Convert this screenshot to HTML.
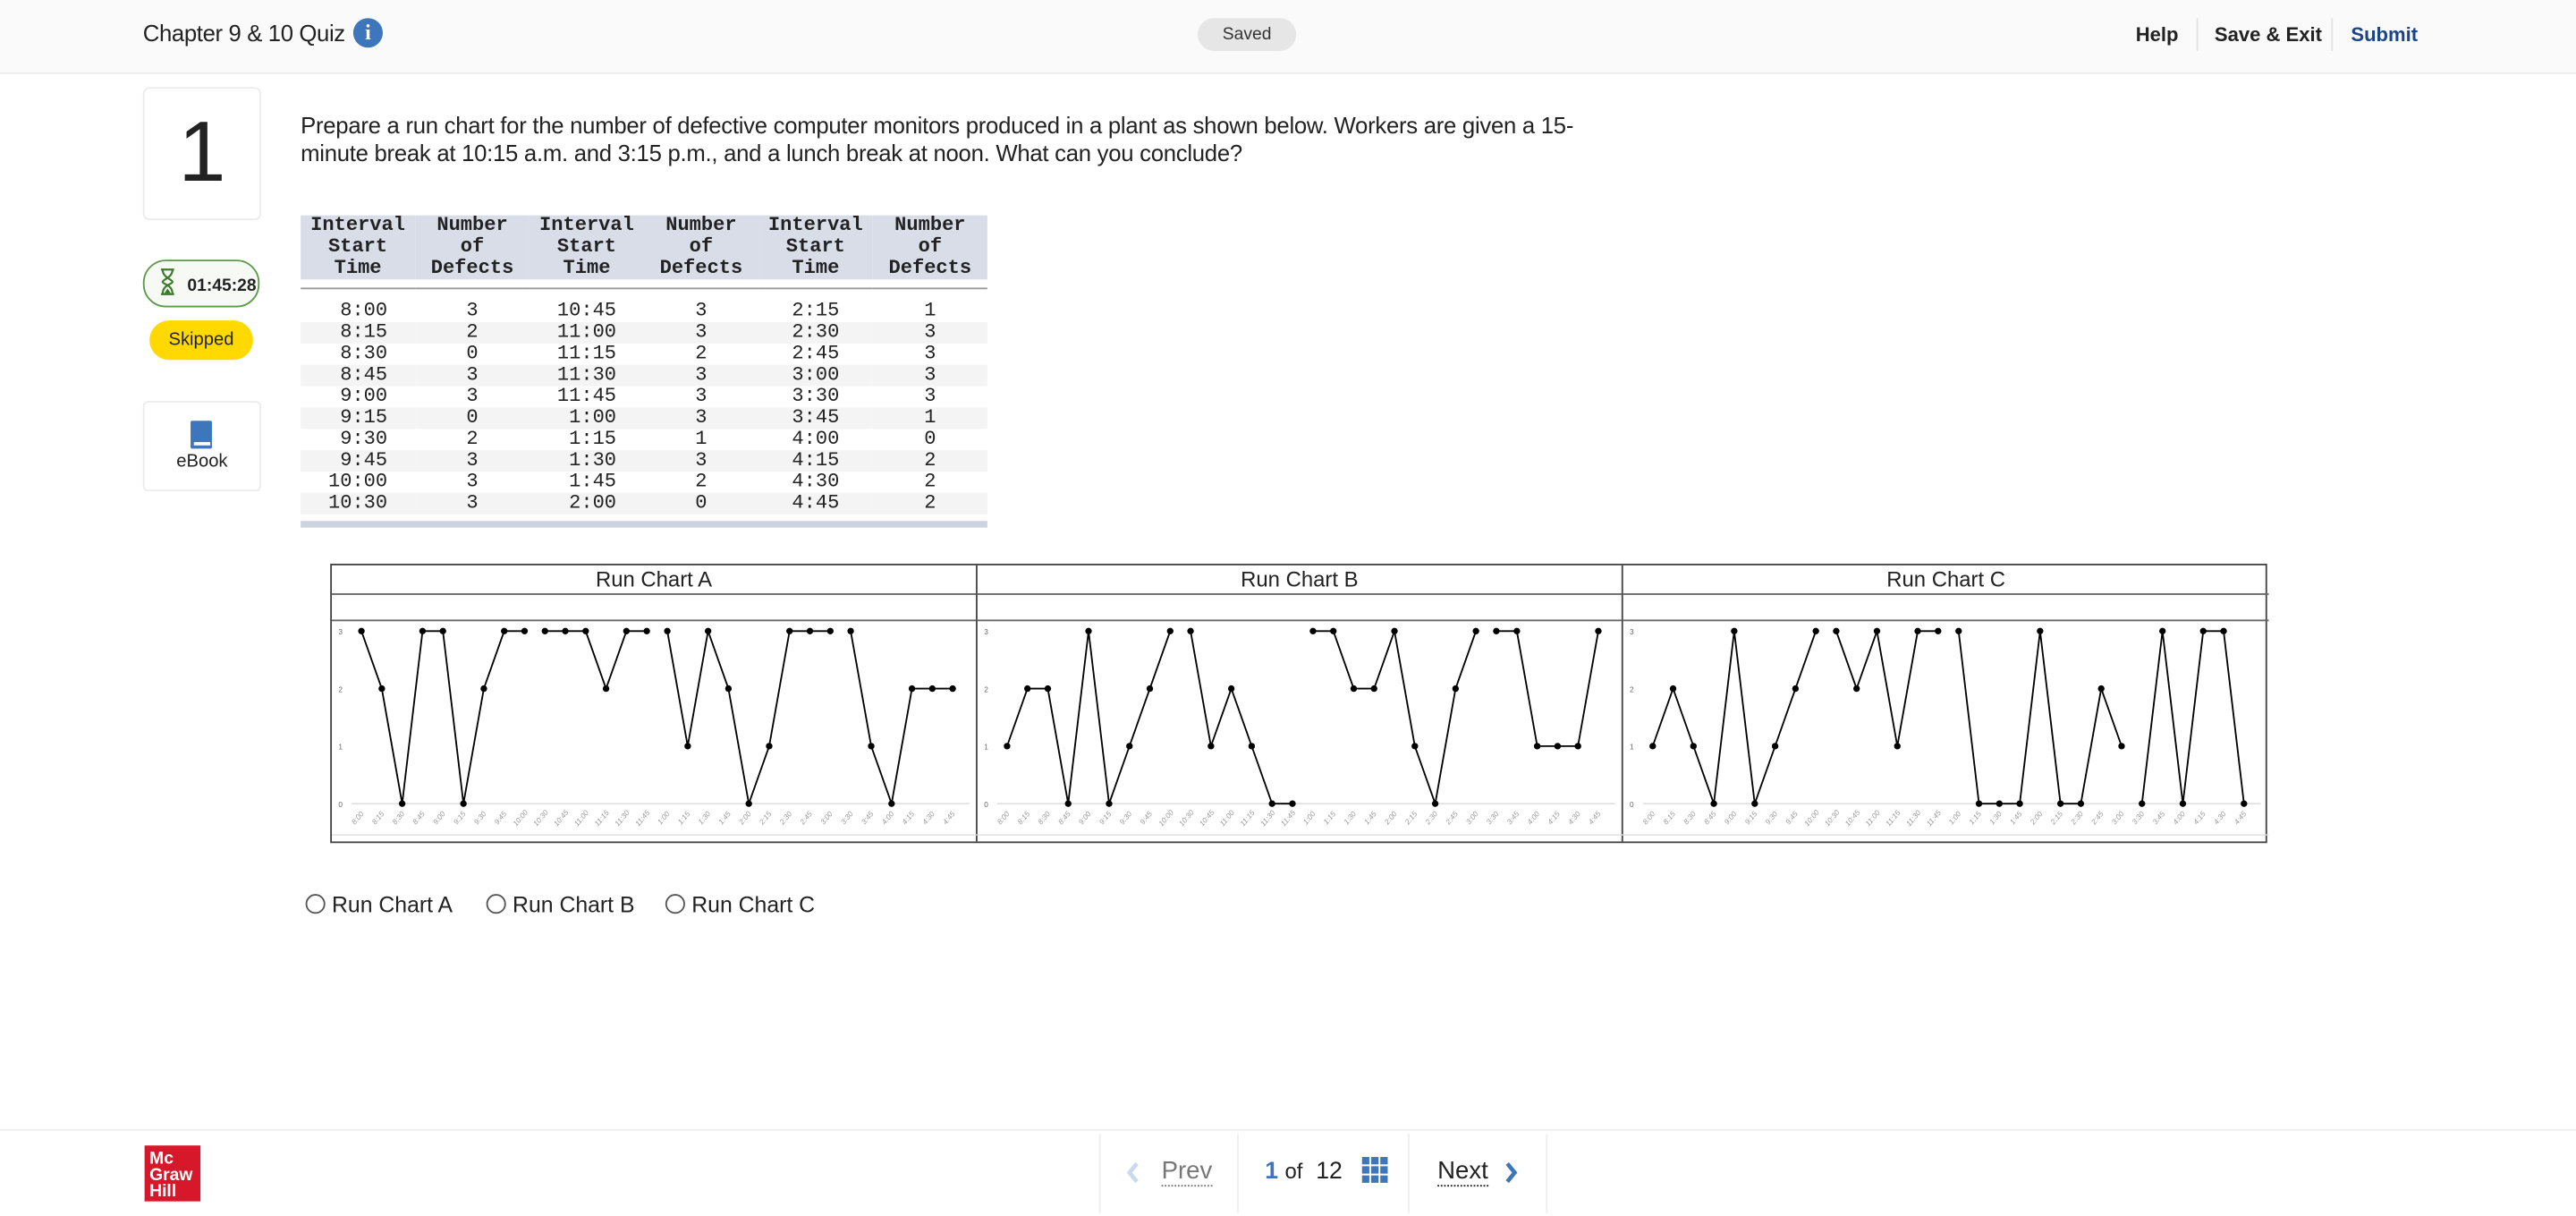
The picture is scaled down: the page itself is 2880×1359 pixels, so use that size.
<!DOCTYPE html>
<html><head><meta charset="utf-8">
<style>
html,body{margin:0;padding:0;background:#fff;width:2880px;height:1358px;overflow:hidden}
#w{position:absolute;left:0;top:0;width:1568px;height:740px;transform:scale(1.836735);transform-origin:0 0;font-family:"Liberation Sans",sans-serif;color:#222}
.a{position:absolute}
.hdr{left:0;top:0;width:1568px;height:44px;background:#fafafa;border-bottom:1px solid #ebebeb}
.nav b{font-weight:bold;font-size:12px}
table.d{border-collapse:collapse;font-family:"Liberation Mono",monospace;font-size:12px;width:418px}
table.d td,table.d th{width:69.6px;text-align:center;padding:0;line-height:13px;height:13px}
table.d th{background:#d9dde8;font-weight:bold;line-height:13px}
table.d tr.z td{background:#f4f4f4}
.ch{left:201px;top:343px;width:1179px;height:170px;border:1px solid #444;box-sizing:border-box}
.cell{position:absolute;top:0;width:393px;height:168px;border-right:1px solid #444;box-sizing:border-box}
.cell .t{height:17px;border-bottom:1px solid #666;text-align:center;font-size:13px;line-height:17px}
.cell .e{height:15px;border-bottom:1px solid #666}
svg text{font-family:"Liberation Sans",sans-serif}
.rad{top:543px;font-size:13.5px}
.rad span{display:inline-block;width:10px;height:10px;border:1px solid #555;border-radius:50%;vertical-align:-1px;margin-right:4px}
</style></head><body><div id="w">
<div class="a hdr"></div>
<div class="a" style="left:87px;top:12px;font-size:14px;letter-spacing:-0.2px">Chapter 9 &amp; 10 Quiz</div>
<div class="a" style="left:215px;top:11px;width:18px;height:18px;border-radius:50%;background:#3d76bb;color:#fff;font:bold 13px 'Liberation Serif',serif;text-align:center;line-height:18px">i</div>
<div class="a" style="left:729px;top:11px;width:60px;height:20px;border-radius:10px;background:#e6e6e6;font-size:10.5px;text-align:center;line-height:20px;color:#333">Saved</div>
<div class="a nav" style="left:1300px;top:12px"><b>Help</b></div>
<div class="a" style="left:1337px;top:11px;width:1px;height:20px;background:#e3e3e3"></div>
<div class="a nav" style="left:1348px;top:12px"><b>Save &amp; Exit</b></div>
<div class="a" style="left:1419px;top:11px;width:1px;height:20px;background:#e3e3e3"></div>
<div class="a nav" style="left:1431px;top:12px;color:#1c4587"><b>Submit</b></div>

<div class="a" style="left:87px;top:53px;width:70px;height:79px;border:1px solid #ececec;border-radius:4px;text-align:center;font-size:52px;line-height:79px">1</div>
<div class="a" style="left:87px;top:158px;width:69px;height:27px;border:1px solid #5a9a48;border-radius:14px;background:#f6f9f4"></div>
<svg class="a" style="left:96px;top:163px" width="12" height="17" viewBox="0 0 12 17"><path d="M2 1h8M2 16h8M3 1c0 5 6 6 6 7.5S3 10 3 16M9 1c0 5-6 6-6 7.5S9 10 9 16" stroke="#3d7a2e" stroke-width="1.2" fill="none"/><path d="M4 15.5l2-3 2 3z" fill="#3d7a2e"/></svg>
<div class="a" style="left:114px;top:168px;font-size:10.5px;font-weight:bold">01:45:28</div>
<div class="a" style="left:91px;top:195px;width:63px;height:24px;border-radius:12px;background:#ffd900;font-size:11px;text-align:center;line-height:24px">Skipped</div>
<div class="a" style="left:87px;top:244px;width:70px;height:53px;border:1px solid #ececec;border-radius:3px"></div>
<div class="a" style="left:116px;top:256px;width:13px;height:17px;background:#3d76bb;border-radius:1px"></div>
<div class="a" style="left:118px;top:269px;width:10px;height:1.5px;background:#fff"></div>
<div class="a" style="left:87px;top:275px;width:72px;text-align:center;font-size:11px">eBook</div>

<div class="a" style="left:183px;top:68px;width:820px;font-size:14px;line-height:17px;letter-spacing:-0.15px;white-space:nowrap">Prepare a run chart for the number of defective computer monitors produced in a plant as shown below. Workers are given a 15-<br>minute break at 10:15 a.m. and 3:15 p.m., and a lunch break at noon. What can you conclude?</div>

<div class="a" style="left:183px;top:131px">
<table class="d">
<tr><th>Interval<br>Start<br>Time</th><th>Number<br>of<br>Defects</th><th>Interval<br>Start<br>Time</th><th>Number<br>of<br>Defects</th><th>Interval<br>Start<br>Time</th><th>Number<br>of<br>Defects</th></tr>
<tr><td colspan="6" style="height:5px;padding:0;border-bottom:1.5px solid #999;line-height:4px"></td></tr>
<tr><td colspan="6" style="height:7px;line-height:7px"></td></tr>
<tr><td>&nbsp;8:00</td><td>3</td><td>10:45</td><td>3</td><td>2:15</td><td>1</td></tr>
<tr class="z"><td>&nbsp;8:15</td><td>2</td><td>11:00</td><td>3</td><td>2:30</td><td>3</td></tr>
<tr><td>&nbsp;8:30</td><td>0</td><td>11:15</td><td>2</td><td>2:45</td><td>3</td></tr>
<tr class="z"><td>&nbsp;8:45</td><td>3</td><td>11:30</td><td>3</td><td>3:00</td><td>3</td></tr>
<tr><td>&nbsp;9:00</td><td>3</td><td>11:45</td><td>3</td><td>3:30</td><td>3</td></tr>
<tr class="z"><td>&nbsp;9:15</td><td>0</td><td>&nbsp;1:00</td><td>3</td><td>3:45</td><td>1</td></tr>
<tr><td>&nbsp;9:30</td><td>2</td><td>&nbsp;1:15</td><td>1</td><td>4:00</td><td>0</td></tr>
<tr class="z"><td>&nbsp;9:45</td><td>3</td><td>&nbsp;1:30</td><td>3</td><td>4:15</td><td>2</td></tr>
<tr><td>10:00</td><td>3</td><td>&nbsp;1:45</td><td>2</td><td>4:30</td><td>2</td></tr>
<tr class="z"><td>10:30</td><td>3</td><td>&nbsp;2:00</td><td>0</td><td>4:45</td><td>2</td></tr>
<tr><td colspan="6" style="height:4px;line-height:4px"></td></tr>
<tr><td colspan="6" style="height:4px;line-height:4px;background:#ccd3e0"></td></tr>
</table></div>

<svg width="0" height="0" style="position:absolute"><defs>
<marker id="m" markerUnits="userSpaceOnUse" markerWidth="6" markerHeight="6" refX="3" refY="3"><circle cx="3" cy="3" r="2" fill="#000"/></marker>
<g id="ax">
<line x1="12" y1="111" x2="388" y2="111" stroke="#ddd" stroke-width="0.8"/>
<line x1="0" y1="130" x2="393" y2="130" stroke="#ddd" stroke-width="0.8"/>
<g font-size="4.5" fill="#666"><text x="4" y="8">3</text><text x="4" y="43">2</text><text x="4" y="78">1</text><text x="4" y="113">0</text></g>
<g font-size="4.5" fill="#999" font-style="italic">
<text transform="translate(14,124) rotate(-50)">8:00</text>
<text transform="translate(26.4,124) rotate(-50)">8:15</text>
<text transform="translate(38.8,124) rotate(-50)">8:30</text>
<text transform="translate(51.2,124) rotate(-50)">8:45</text>
<text transform="translate(63.6,124) rotate(-50)">9:00</text>
<text transform="translate(76.1,124) rotate(-50)">9:15</text>
<text transform="translate(88.5,124) rotate(-50)">9:30</text>
<text transform="translate(100.9,124) rotate(-50)">9:45</text>
<text transform="translate(112.3,125) rotate(-50)">10:00</text>
<text transform="translate(124.7,125) rotate(-50)">10:30</text>
<text transform="translate(137.1,125) rotate(-50)">10:45</text>
<text transform="translate(149.5,125) rotate(-50)">11:00</text>
<text transform="translate(161.9,125) rotate(-50)">11:15</text>
<text transform="translate(174.3,125) rotate(-50)">11:30</text>
<text transform="translate(186.7,125) rotate(-50)">11:45</text>
<text transform="translate(200.2,124) rotate(-50)">1:00</text>
<text transform="translate(212.6,124) rotate(-50)">1:15</text>
<text transform="translate(225,124) rotate(-50)">1:30</text>
<text transform="translate(237.4,124) rotate(-50)">1:45</text>
<text transform="translate(249.8,124) rotate(-50)">2:00</text>
<text transform="translate(262.2,124) rotate(-50)">2:15</text>
<text transform="translate(274.6,124) rotate(-50)">2:30</text>
<text transform="translate(287,124) rotate(-50)">2:45</text>
<text transform="translate(299.4,124) rotate(-50)">3:00</text>
<text transform="translate(311.8,124) rotate(-50)">3:30</text>
<text transform="translate(324.3,124) rotate(-50)">3:45</text>
<text transform="translate(336.7,124) rotate(-50)">4:00</text>
<text transform="translate(349.1,124) rotate(-50)">4:15</text>
<text transform="translate(361.5,124) rotate(-50)">4:30</text>
<text transform="translate(373.9,124) rotate(-50)">4:45</text>
</g></g></defs></svg>

<div class="a ch">
<div class="cell" style="left:0">
<div class="t">Run Chart A</div><div class="e"></div>
<svg width="393" height="136"><use href="#ax"/>
<g fill="none" stroke="#000" stroke-width="1" marker-start="url(#m)" marker-mid="url(#m)" marker-end="url(#m)">
<polyline points="18,6 30.4,41 42.8,111 55.2,6 67.6,6 80.1,111 92.5,41 104.9,6 117.3,6"/>
<polyline points="129.7,6 142.1,6 154.5,6 166.9,41 179.3,6 191.7,6"/>
<polyline points="204.2,6 216.6,76 229,6 241.4,41 253.8,111 266.2,76 278.6,6 291,6 303.4,6"/>
<polyline points="315.8,6 328.3,76 340.7,111 353.1,41 365.5,41 377.9,41"/>
</g></svg></div>
<div class="cell" style="left:393px">
<div class="t">Run Chart B</div><div class="e"></div>
<svg width="393" height="136"><use href="#ax"/>
<g fill="none" stroke="#000" stroke-width="1" marker-start="url(#m)" marker-mid="url(#m)" marker-end="url(#m)">
<polyline points="18,76 30.4,41 42.8,41 55.2,111 67.6,6 80.1,111 92.5,76 104.9,41 117.3,6"/>
<polyline points="129.7,6 142.1,76 154.5,41 166.9,76 179.3,111 191.7,111"/>
<polyline points="204.2,6 216.6,6 229,41 241.4,41 253.8,6 266.2,76 278.6,111 291,41 303.4,6"/>
<polyline points="315.8,6 328.3,6 340.7,76 353.1,76 365.5,76 377.9,6"/>
</g></svg></div>
<div class="cell" style="left:786px;border-right:none">
<div class="t">Run Chart C</div><div class="e"></div>
<svg width="393" height="136"><use href="#ax"/>
<g fill="none" stroke="#000" stroke-width="1" marker-start="url(#m)" marker-mid="url(#m)" marker-end="url(#m)">
<polyline points="18,76 30.4,41 42.8,76 55.2,111 67.6,6 80.1,111 92.5,76 104.9,41 117.3,6"/>
<polyline points="129.7,6 142.1,41 154.5,6 166.9,76 179.3,6 191.7,6"/>
<polyline points="204.2,6 216.6,111 229,111 241.4,111 253.8,6 266.2,111 278.6,111 291,41 303.4,76"/>
<polyline points="315.8,111 328.3,6 340.7,111 353.1,6 365.5,6 377.9,111"/>
</g></svg></div>
</div>

<div class="a rad" style="left:186px"><span></span>Run Chart A</div>
<div class="a rad" style="left:296px"><span></span>Run Chart B</div>
<div class="a rad" style="left:405px"><span></span>Run Chart C</div>

<div class="a" style="left:0;top:687px;width:1568px;height:1px;background:#eee"></div>
<div class="a" style="left:88px;top:697px;width:34px;height:34px;background:#d7182a;color:#fff;font-weight:bold;font-size:10.5px;line-height:10px;padding:3px 0 0 3px;box-sizing:border-box">Mc<br>Graw<br>Hill</div>
<div class="a" style="left:669px;top:690px;width:1px;height:48px;background:#eee"></div>
<div class="a" style="left:753px;top:690px;width:1px;height:48px;background:#eee"></div>
<div class="a" style="left:857px;top:690px;width:1px;height:48px;background:#eee"></div>
<div class="a" style="left:941px;top:690px;width:1px;height:48px;background:#eee"></div>
<svg class="a" style="left:685px;top:706px" width="10" height="15"><path d="M7 2L2.5 7.5 7 13" stroke="#c9daee" stroke-width="2.5" fill="none"/></svg>
<div class="a" style="left:707px;top:705px;font-size:15px;color:#777;border-bottom:1.5px dotted #777;line-height:16px">Prev</div>
<div class="a" style="left:770px;top:705px;font-size:14.5px"><b style="color:#3d76bb">1</b> <span style="font-size:13px">of</span>&nbsp; 12</div>
<svg class="a" style="left:829px;top:704px" width="16" height="16"><g fill="#3d76bb"><rect x="0" y="0" width="4.5" height="4.5"/><rect x="5.6" y="0" width="4.5" height="4.5"/><rect x="11.2" y="0" width="4.5" height="4.5"/><rect x="0" y="5.6" width="4.5" height="4.5"/><rect x="5.6" y="5.6" width="4.5" height="4.5"/><rect x="11.2" y="5.6" width="4.5" height="4.5"/><rect x="0" y="11.2" width="4.5" height="4.5"/><rect x="5.6" y="11.2" width="4.5" height="4.5"/><rect x="11.2" y="11.2" width="4.5" height="4.5"/></g></svg>
<div class="a" style="left:875px;top:705px;font-size:15px;color:#222;border-bottom:1.5px dotted #222;line-height:16px">Next</div>
<svg class="a" style="left:915px;top:706px" width="10" height="15"><path d="M2.5 2L7 7.5 2.5 13" stroke="#3d76bb" stroke-width="2.5" fill="none"/></svg>
</div></body></html>
